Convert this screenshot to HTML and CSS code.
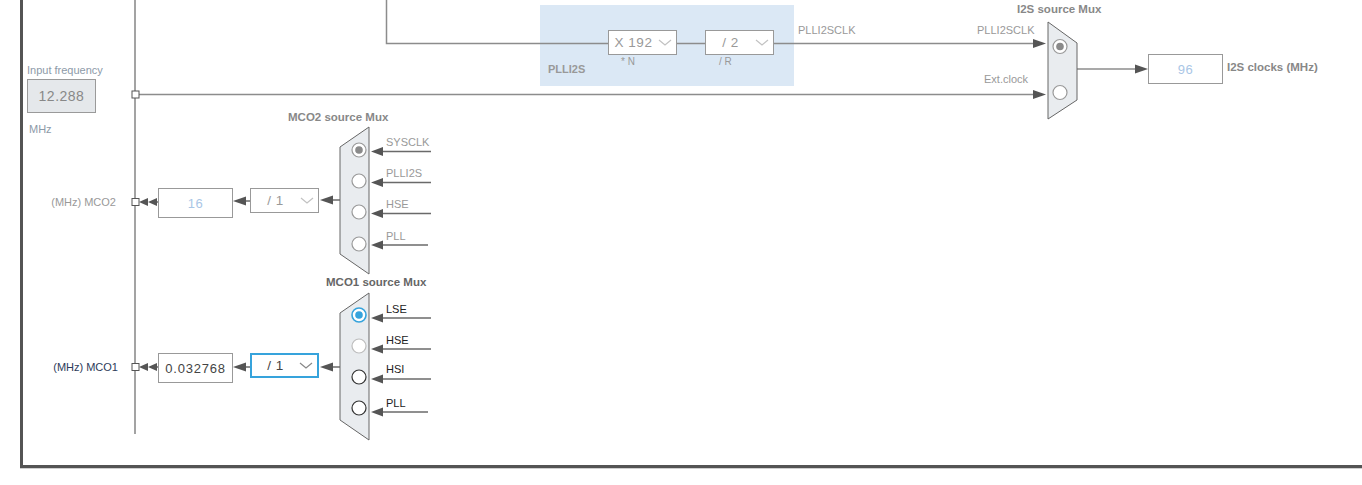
FILE: index.html
```html
<!DOCTYPE html>
<html>
<head>
<meta charset="utf-8">
<link rel="stylesheet" href="styles.css">
</head>
<body>
<div class="canvas">
  <div class="frame"></div>
  <div class="pll-region"><span class="region-title">PLLI2S</span></div>

  <svg class="wires" width="1362" height="485" viewBox="0 0 1362 485">
    <path class="bus" d="M135 0 V434"/>
    <g class="wire">
      <path d="M386.5 0 V43.5 H608"/>
      <path d="M676 43.5 H705"/>
      <path d="M773 43.5 H1034"/>
      <path d="M139 94.5 H1034"/>
      <path d="M1077 69 H1136"/>
    </g>
    <g class="wire dark">
      <path d="M431 151.5 H382"/>
      <path d="M431 182.5 H382"/>
      <path d="M431 213.5 H382"/>
      <path d="M428 245 H382"/>
      <path d="M431 318 H382"/>
      <path d="M431 349 H382"/>
      <path d="M431 379 H382"/>
      <path d="M428 412 H382"/>
      <path d="M340 200 H330"/>
      <path d="M250 201 H244"/>
      <path d="M158 202 H150"/>
      <path d="M340 367 H330"/>
      <path d="M250 367 H244"/>
      <path d="M158 367 H150"/>
    </g>
    <g class="arrow">
      <polygon points="1033,39 1046,43.5 1033,48"/>
      <polygon points="1033,90 1046,94.5 1033,99"/>
      <polygon points="1135,64.5 1148,69 1135,73.5"/>
      <polygon points="383,147 371,151.5 383,156"/>
      <polygon points="383,178 371,182.5 383,187"/>
      <polygon points="383,209 371,213.5 383,218"/>
      <polygon points="383,240.5 371,245 383,249.5"/>
      <polygon points="383,313.5 371,318 383,322.5"/>
      <polygon points="383,344.5 371,349 383,353.5"/>
      <polygon points="383,374.5 371,379 383,383.5"/>
      <polygon points="383,407.5 371,412 383,416.5"/>
      <polygon points="333,195.5 320,200 333,204.5"/>
      <polygon points="246,196.5 233,201 246,205.5"/>
      <polygon points="148,198 139,202 148,206"/>
      <polygon points="157,198 148,202 157,206"/>
      <polygon points="333,362.5 320,367 333,371.5"/>
      <polygon points="246,362.5 233,367 246,371.5"/>
      <polygon points="148,363 139,367 148,371"/>
      <polygon points="157,363 148,367 157,371"/>
    </g>
    <g class="node">
      <rect x="132" y="91" width="7" height="7"/>
      <rect x="132" y="198.5" width="7" height="7"/>
      <rect x="132" y="363.5" width="7" height="7"/>
    </g>
    <g class="mux">
      <polygon points="1048,22 1077,43 1077,100 1048,119"/>
      <polygon points="340,147 369,127 369,274 340,254"/>
      <polygon points="340,313 369,293 369,440 340,420"/>
    </g>
    <g class="radio grey">
      <circle cx="1060" cy="46.5" r="7"/>
      <circle cx="1060" cy="92.5" r="7"/>
      <circle cx="359" cy="150" r="7"/>
      <circle cx="359" cy="181" r="7"/>
      <circle cx="359" cy="212" r="7"/>
      <circle cx="359" cy="244" r="7"/>
    </g>
    <g class="dot grey">
      <circle cx="1060" cy="46.5" r="3.8"/>
      <circle cx="359" cy="150" r="3.8"/>
    </g>
    <circle class="radio blue" cx="359" cy="315" r="7"/>
    <circle class="dot blue" cx="359" cy="315" r="3.8"/>
    <circle class="radio light" cx="359" cy="346" r="7"/>
    <circle class="radio black" cx="359" cy="377" r="7"/>
    <circle class="radio black" cx="359" cy="408" r="7"/>
  </svg>

  <!-- PLLI2S -->
  <div class="dropdown dd-n"><span class="dd-text">X 192</span><svg class="chev" width="14" height="7" viewBox="0 0 14 7"><path d="M1 1 L7 6 L13 1"/></svg></div>
  <div class="dropdown dd-r"><span class="dd-text">/ 2</span><svg class="chev" width="14" height="7" viewBox="0 0 14 7"><path d="M1 1 L7 6 L13 1"/></svg></div>
  <div class="small-label lbl-n">* N</div>
  <div class="small-label lbl-r">/ R</div>
  <div class="label lbl-pllclk1">PLLI2SCLK</div>

  <!-- I2S mux -->
  <div class="title lbl-i2s-mux">I2S source Mux</div>
  <div class="label lbl-pllclk2">PLLI2SCLK</div>
  <div class="label lbl-ext">Ext.clock</div>
  <div class="valbox box-96">96</div>
  <div class="title lbl-i2s-clk">I2S clocks (MHz)</div>

  <!-- Input frequency -->
  <div class="label-blue lbl-input">Input frequency</div>
  <div class="inbox">12.288</div>
  <div class="label-blue lbl-mhz">MHz</div>

  <!-- MCO2 -->
  <div class="title lbl-mco2-mux">MCO2 source Mux</div>
  <div class="label in-lbl" style="top:136px">SYSCLK</div>
  <div class="label in-lbl" style="top:167px">PLLI2S</div>
  <div class="label in-lbl" style="top:198px">HSE</div>
  <div class="label in-lbl" style="top:230px">PLL</div>
  <div class="dropdown dd-mco2"><span class="dd-text">/ 1</span><svg class="chev" width="14" height="7" viewBox="0 0 14 7"><path d="M1 1 L7 6 L13 1"/></svg></div>
  <div class="valbox box-mco2">16</div>
  <div class="label out-lbl lbl-mco2">(MHz) MCO2</div>

  <!-- MCO1 -->
  <div class="title dark-title lbl-mco1-mux">MCO1 source Mux</div>
  <div class="label in-lbl dark-lbl" style="top:303px">LSE</div>
  <div class="label in-lbl dark-lbl" style="top:334px">HSE</div>
  <div class="label in-lbl dark-lbl" style="top:363px">HSI</div>
  <div class="label in-lbl dark-lbl" style="top:397px">PLL</div>
  <div class="dropdown active dd-mco1"><span class="dd-text">/ 1</span><svg class="chev" width="14" height="7" viewBox="0 0 14 7"><path d="M1 1 L7 6 L13 1"/></svg></div>
  <div class="valbox dark-val box-mco1">0.032768</div>
  <div class="label out-lbl navy lbl-mco1">(MHz) MCO1</div>
</div>
</body>
</html>
```

FILE: styles.css
```css
html, body {
  margin: 0;
  padding: 0;
  background: #fff;
}

body {
  font-family: "Liberation Sans", Arial, sans-serif;
  font-size: 11px;
  color: #999;
}

.canvas {
  position: relative;
  width: 1362px;
  height: 485px;
  overflow: hidden;
}

.frame {
  position: absolute;
  left: 20px;
  top: -20px;
  width: 1400px;
  height: 488px;
  box-sizing: border-box;
  border-left: 3px solid #545454;
  border-bottom: 3px solid #545454;
  box-shadow: 0 1px 0 #cfcfcf;
}

.pll-region {
  position: absolute;
  left: 540px;
  top: 5px;
  width: 254px;
  height: 81px;
  background: #dbe8f5;
}

.region-title {
  position: absolute;
  left: 8px;
  top: 58px;
  font-weight: bold;
  color: #999;
  font-size: 11px;
  line-height: 12px;
}

.wires {
  position: absolute;
  left: 0;
  top: 0;
}

.bus {
  stroke: #a3a3a3;
  stroke-width: 2;
  fill: none;
}

.wire path {
  stroke: #8c8c8c;
  stroke-width: 1.5;
  fill: none;
}

.wire.dark path {
  stroke: #6a6a6a;
}

.arrow polygon {
  fill: #555;
}

.node rect {
  fill: #fff;
  stroke: #555;
  stroke-width: 1;
}

.mux polygon {
  fill: #e9ecef;
  stroke: #666;
  stroke-width: 1;
}

.radio {
  fill: #fff;
  stroke-width: 1.2;
}
.radio.grey circle, .radio.grey { stroke: #999; fill: #fff; }
.radio.blue { stroke: #36a3dc; stroke-width: 1.6; }
.radio.light { stroke: #bdbdbd; }
.radio.black { stroke: #333; }
.dot.grey circle { fill: #8a8a8a; }
.dot.blue { fill: #36a3dc; }

.label, .title, .small-label, .label-blue {
  position: absolute;
  line-height: 12px;
  white-space: nowrap;
}

.label { color: #999; font-size: 11px; }
.title { font-weight: bold; color: #888; font-size: 11.5px; }
.dark-title { color: #666; }
.small-label { color: #999; font-size: 10px; }
.label-blue { color: #8d9aa8; font-size: 11px; }
.dark-lbl { color: #222; }
.navy { color: #2d3b5a; }

.lbl-n { left: 621px; top: 56px; }
.lbl-r { left: 719px; top: 56px; }
.lbl-pllclk1 { left: 798px; top: 24px; }
.lbl-i2s-mux { left: 1017px; top: 3px; }
.lbl-pllclk2 { left: 977px; top: 24px; }
.lbl-ext { left: 984px; top: 73px; }
.lbl-i2s-clk { left: 1227px; top: 61px; }
.lbl-input { left: 27px; top: 64px; }
.lbl-mhz { left: 29px; top: 123px; }
.lbl-mco2-mux { left: 288px; top: 111px; }
.lbl-mco1-mux { left: 326px; top: 276px; }
.in-lbl { left: 386px; }

.out-lbl {
  left: 0;
  width: 116px;
  text-align: right;
}
.lbl-mco2 { top: 196px; }
.lbl-mco1 { top: 361px; width: 118px; }

.dropdown {
  position: absolute;
  box-sizing: border-box;
  display: flex;
  align-items: center;
  background: #fff;
  border: 1px solid #999;
  font-size: 13.5px;
  letter-spacing: 0.5px;
  color: #999;
}
.dropdown .dd-text {
  flex: 1;
  text-align: center;
}
.chev {
  flex: none;
  margin-right: 4px;
}
.chev path {
  fill: none;
  stroke: #c2c2c2;
  stroke-width: 1.2;
}
.dropdown.active {
  border: 2px solid #36a3dc;
  color: #444;
}
.dropdown.active .chev path { stroke: #888; }
.dropdown.active .chev { margin-right: 4px; }

.dd-n { left: 608px; top: 30px; width: 69px; height: 25px; }
.dd-r { left: 705px; top: 30px; width: 69px; height: 25px; }
.dd-mco2 { left: 250px; top: 188px; width: 69px; height: 25px; }
.dd-mco1 { left: 250px; top: 353px; width: 69px; height: 25px; }

.valbox {
  position: absolute;
  box-sizing: border-box;
  display: flex;
  align-items: center;
  justify-content: center;
  background: #fff;
  border: 1px solid #999;
  font-size: 13px;
  letter-spacing: 0.6px;
  color: #a9c6e6;
}
.dark-val { color: #444; font-size: 13px; letter-spacing: 0.8px; }

.box-96 { left: 1148px; top: 54px; width: 75px; height: 30px; }
.box-mco2 { left: 158px; top: 188px; width: 75px; height: 30px; }
.box-mco1 { left: 158px; top: 353px; width: 75px; height: 30px; }

.inbox {
  position: absolute;
  left: 27px;
  top: 79px;
  width: 69px;
  height: 34px;
  box-sizing: border-box;
  border: 1px solid #9a9a9a;
  background: #e5e8eb;
  display: flex;
  align-items: center;
  justify-content: center;
  font-size: 14px;
  letter-spacing: 0.5px;
  color: #888;
}
```
